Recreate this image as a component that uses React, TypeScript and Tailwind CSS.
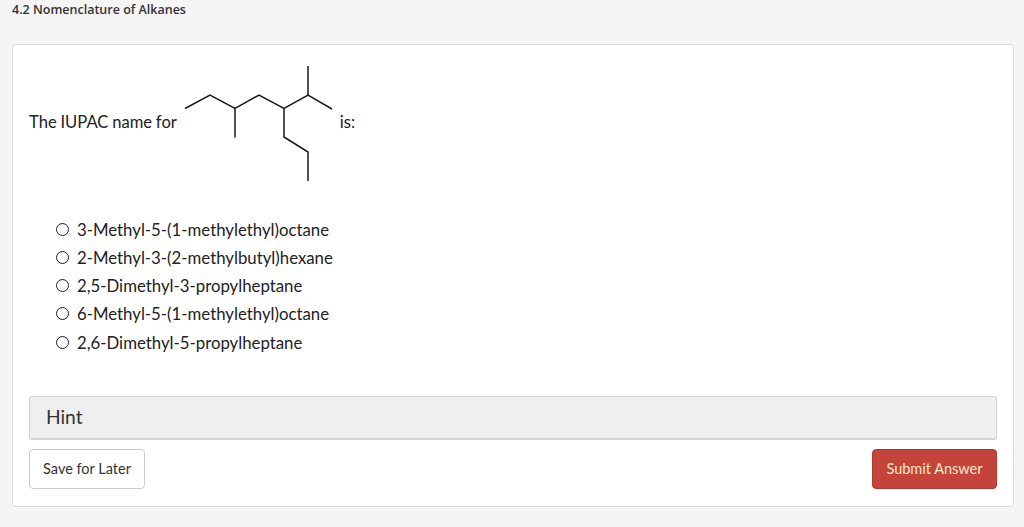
import React from "react";

const options = [
  "3-Methyl-5-(1-methylethyl)octane",
  "2-Methyl-3-(2-methylbutyl)hexane",
  "2,5-Dimethyl-3-propylheptane",
  "6-Methyl-5-(1-methylethyl)octane",
  "2,6-Dimethyl-5-propylheptane",
];

function Molecule() {
  return (
    <svg width="150" height="116" viewBox="183 66 150 116" fill="none" stroke="#1a1a1a" strokeWidth="1.5" className="shrink-0">
      <polyline points="185,108.5 210,95 235,108.5 259,95 284,108.5 308,95 332,109" />
      <line x1="235" y1="108.5" x2="235" y2="137.5" />
      <polyline points="284,108.5 284,137 308,152 308,181" />
      <line x1="308" y1="95" x2="308" y2="66" />
    </svg>
  );
}

export default function App() {
  return (
    <div className="h-[527px] w-[1024px] overflow-hidden bg-[#f5f5f5] pl-3 font-['Lato',sans-serif] text-[#222]">
      <h1 className="h-[44px] pt-[1px] font-['Open_Sans',sans-serif] text-[12.5px] leading-[18px] font-semibold text-[#333]">
        4.2 Nomenclature of Alkanes
      </h1>

      <div className="h-[463px] w-[1002px] rounded-[3px] border border-[#dcdcdc] bg-white px-4 pt-[21px]">
        <div className="flex h-[116px] items-center text-[16.6px] leading-[24px] [word-spacing:-0.5px]">
          <span className="-mt-[5px]">The IUPAC name for</span>
          <span className="ml-[6px]"><Molecule /></span>
          <span className="-mt-[5px] ml-[7px]">is:</span>
        </div>

        <div className="mt-[33px] flex flex-col pl-[27px]">
          {options.map((option) => (
            <label key={option} className="flex h-[28.25px] items-center text-[16.8px]">
              <span className="h-[13px] w-[13px] shrink-0 rounded-full border-[1.5px] border-[#222] bg-white" />
              <span className="ml-[8px]">{option}</span>
            </label>
          ))}
        </div>

        <div className="mt-[40px] flex h-[44px] items-center rounded-[3px] border border-b-2 border-[#d4d4d4] bg-[#efefef] px-4 text-[19.2px] text-[#333]">
          Hint
        </div>

        <div className="mt-[9px] flex items-center justify-between text-[14.5px]">
          <button className="h-[40px] w-[116px] rounded-[4px] border border-[#ccc] bg-white pb-[1px] text-[#333]">
            Save for Later
          </button>
          <button className="h-[40px] w-[125px] rounded-[4px] border border-[#b13a30] bg-[#c4433a] pb-[1px] text-[#ffe9c8]">
            Submit Answer
          </button>
        </div>
      </div>
    </div>
  );
}
